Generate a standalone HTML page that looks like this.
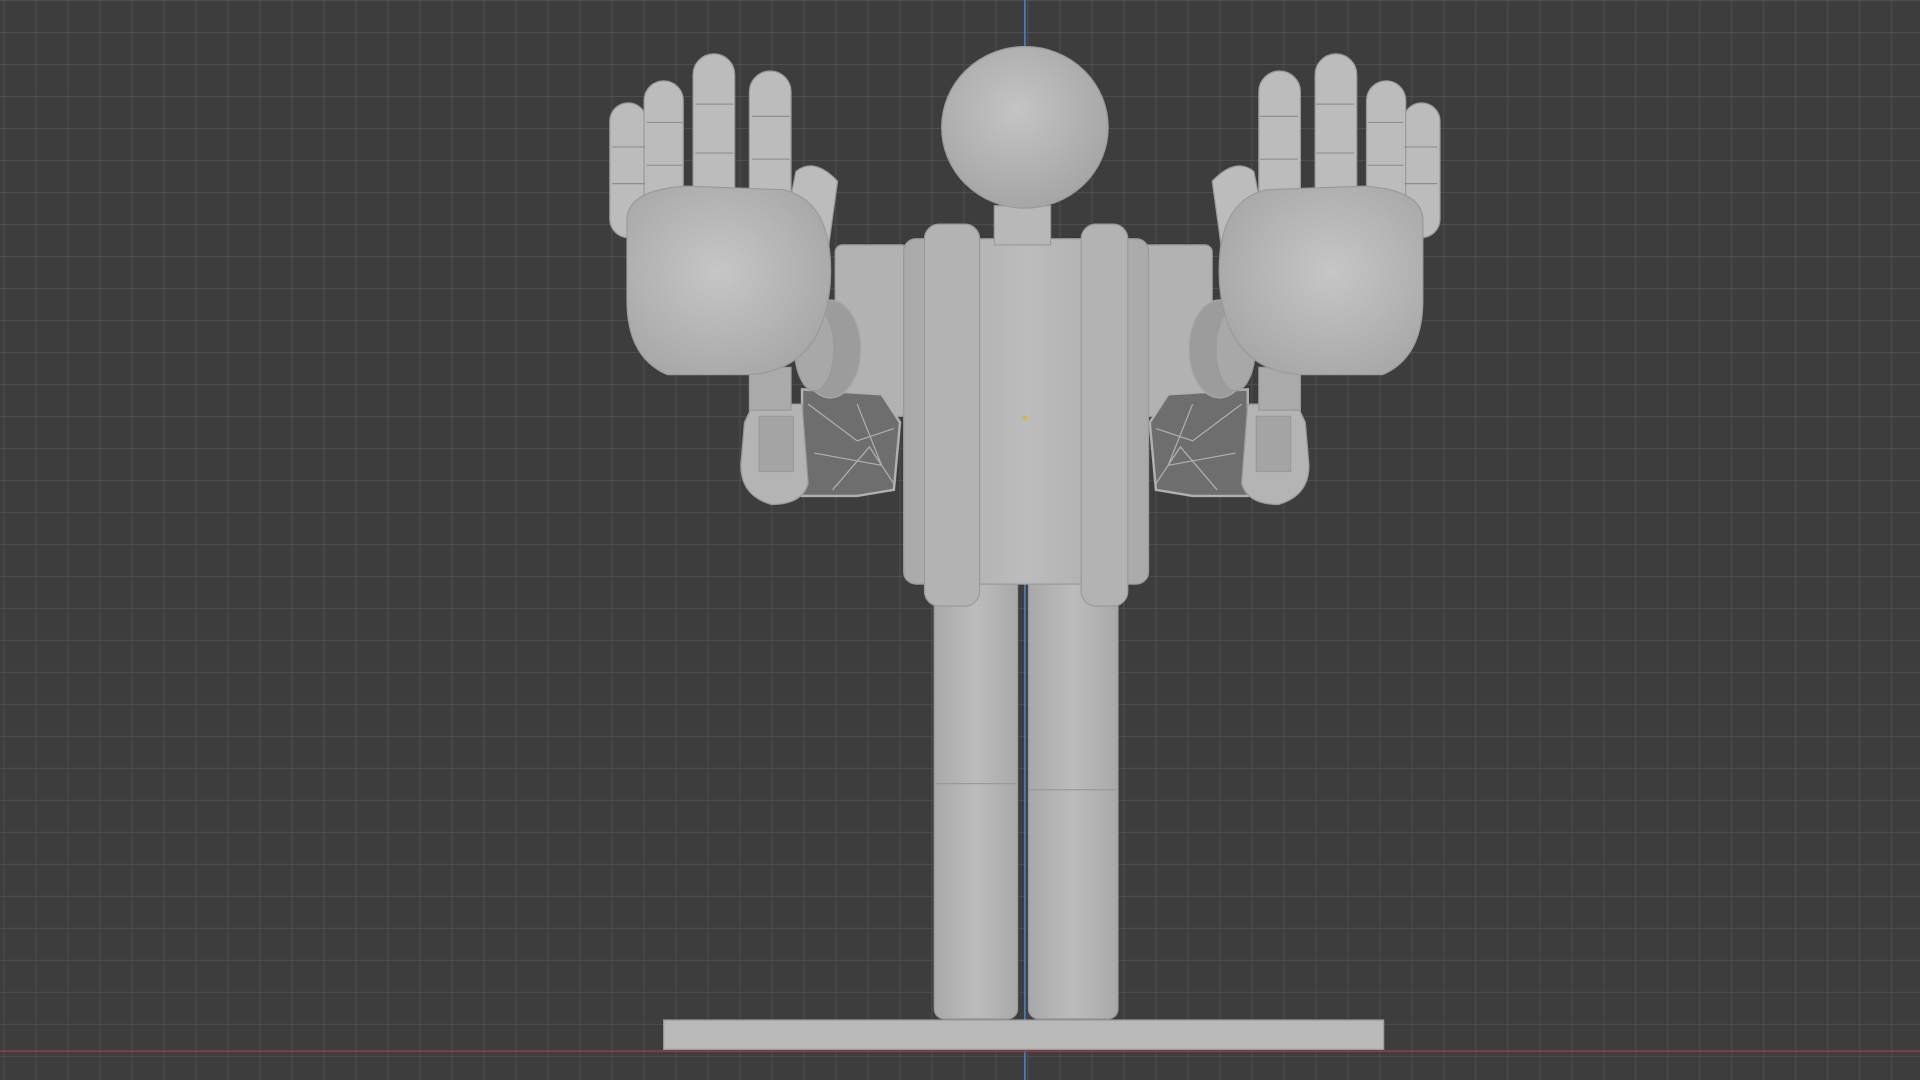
<!DOCTYPE html>
<html><head><meta charset="utf-8"><style>
html,body{margin:0;padding:0;background:#3d3d3d;overflow:hidden}
svg{display:block}
</style></head><body>
<svg width="1920" height="1080" viewBox="0 0 1568 882" preserveAspectRatio="none" xmlns="http://www.w3.org/2000/svg">
<defs>
<pattern id="g" x="3" y="0" width="26.13" height="26.13" patternUnits="userSpaceOnUse">
<path d="M0 0H26.13M0 0V26.13" stroke="#545454" stroke-width="1.2" fill="none"/>
</pattern>
<linearGradient id="body" x1="0" x2="1"><stop offset="0" stop-color="#a9a9a9"/><stop offset=".5" stop-color="#bcbcbc"/><stop offset="1" stop-color="#a9a9a9"/></linearGradient>
<radialGradient id="head" cx=".45" cy=".4" r=".6"><stop offset="0" stop-color="#c4c4c4"/><stop offset="1" stop-color="#a6a6a6"/></radialGradient>
<radialGradient id="palm" cx=".45" cy=".45" r=".6"><stop offset="0" stop-color="#c6c6c6"/><stop offset="1" stop-color="#a8a8a8"/></radialGradient>
<g id="fore">
<path d="M655 318 L720 322 L735 345 L730 400 L700 405 L655 405Z" fill="#6e6e6e" stroke="#b0b0b0" stroke-width="2"/>
<path d="M660 330 L700 360 L730 350 M665 370 L720 380 L700 330 M680 400 L710 365 L730 395" stroke="#b0b0b0" stroke-width="1" fill="none"/>
<path d="M615 330 L655 330 L660 395 Q655 412 630 412 Q605 405 605 380 L608 345Z" fill="#b4b4b4" stroke="#9a9a9a"/>
<rect x="620" y="340" width="28" height="45" fill="#a4a4a4"/>
<rect x="612" y="300" width="34" height="35" fill="#aaaaaa"/>
<ellipse cx="678" cy="285" rx="25" ry="40" fill="#9c9c9c" stroke="#aaa"/>
<ellipse cx="665" cy="285" rx="16" ry="34" fill="#a8a8a8"/>
</g>
<g id="hand" fill="#bcbcbc" stroke="#9a9a9a" stroke-width="1">
<rect x="498" y="84" width="30" height="110" rx="15"/>
<rect x="526" y="66" width="32" height="120" rx="16"/>
<rect x="566" y="44" width="34" height="130" rx="17"/>
<rect x="612" y="58" width="34" height="125" rx="17"/>
<path d="M500 120 H527 M500 150 H527 M528 100 H557 M528 135 H557 M568 85 H599 M568 125 H599 M614 95 H645 M614 130 H645" stroke="#8e8e8e"/>
<path d="M650 140 Q665 128 684 148 L672 235 L632 232Z"/>
<path d="M512 178 Q514 155 560 152 L640 155 Q682 165 678 232 Q672 302 612 306 L545 306 Q512 292 512 245Z" fill="url(#palm)"/>
</g>
</defs>
<rect width="1568" height="882" fill="#3d3d3d"/>
<rect width="1568" height="882" fill="url(#g)"/>
<line x1="837" y1="0" x2="837" y2="882" stroke="#4a78b8" stroke-width="1.5"/>
<line x1="0" y1="858.5" x2="1568" y2="858.5" stroke="#8a3d48" stroke-width="1.5"/>

<g fill="#b6b6b6" stroke="#9a9a9a" stroke-width="1">
<rect x="763" y="470" width="68" height="362" rx="8" fill="url(#body)"/>
<rect x="840" y="470" width="73" height="362" rx="8" fill="url(#body)"/>
<line x1="764" y1="640" x2="830" y2="640" stroke="#999"/>
<line x1="841" y1="645" x2="912" y2="645" stroke="#999"/>
<rect x="542" y="833" width="588" height="24" fill="#b9b9b9"/>
<rect x="682" y="200" width="60" height="140" rx="6" fill="#b2b2b2"/>
<rect x="930" y="200" width="60" height="140" rx="6" fill="#b2b2b2"/>
<use href="#fore"/>
<use href="#fore" transform="translate(1674 0) scale(-1 1)"/>
<rect x="738" y="195" width="200" height="282" rx="10" fill="url(#body)"/>
<rect x="755" y="183" width="45" height="312" rx="12" fill="#b3b3b3"/>
<rect x="883" y="183" width="38" height="312" rx="12" fill="#b3b3b3"/>
<rect x="812" y="168" width="46" height="32" fill="#b8b8b8"/>
<ellipse cx="837" cy="104" rx="68" ry="66" fill="url(#head)"/>
<use href="#hand"/>
<use href="#hand" transform="translate(1674 0) scale(-1 1)"/>
</g>
<circle cx="837" cy="341" r="2" fill="#d9b24a"/>
</svg>
</body></html>
